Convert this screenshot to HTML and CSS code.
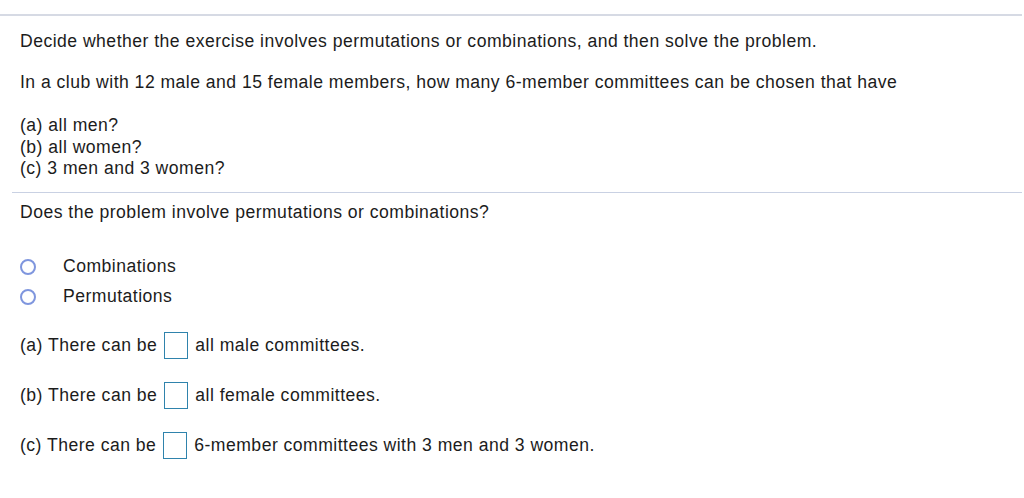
FILE: index.html
```html
<!DOCTYPE html>
<html>
<head>
<meta charset="utf-8">
<link rel="stylesheet" href="styles.css">
</head>
<body>
<div class="page">
  <div class="top-rule"></div>
  <div class="question">
    <p class="line intro">Decide whether the exercise involves permutations or combinations, and then solve the problem.</p>
    <p class="line stem">In a club with 12 male and 15 female members, how many 6-member committees can be chosen that have</p>
    <div class="parts">
      <div>(a) all men?</div>
      <div>(b) all women?</div>
      <div>(c) 3 men and 3 women?</div>
    </div>
  </div>
  <div class="mid-rule"></div>
  <div class="answers">
    <p class="line ask">Does the problem involve permutations or combinations?</p>
    <div class="choices">
      <label class="choice"><span class="radio"></span><span>Combinations</span></label>
      <label class="choice"><span class="radio"></span><span>Permutations</span></label>
    </div>
    <div class="fill first"><span>(a) There can be</span><span class="box"></span><span>all male committees.</span></div>
    <div class="fill"><span>(b) There can be</span><span class="box"></span><span>all female committees.</span></div>
    <div class="fill"><span>(c) There can be</span><span class="box"></span><span>6-member committees with 3 men and 3 women.</span></div>
  </div>
</div>
</body>
</html>
```

FILE: styles.css
```css
html, body {
  margin: 0;
  padding: 0;
  background: #ffffff;
}
body {
  font-family: "Liberation Sans", Arial, Helvetica, sans-serif;
  font-size: 17.6px;
  letter-spacing: 0.47px;
  color: #1c1c1c;
}
.page {
  width: 1024px;
  padding-top: 14px;
}
.top-rule {
  width: 1022px;
  height: 2px;
  background: #d6dae4;
}
.question {
  padding-left: 20px;
}
.line {
  margin: 0;
  line-height: 20px;
}
.intro {
  margin-top: 15px;
}
.stem {
  margin-top: 21px;
}
.parts {
  margin-top: 23px;
  line-height: 21.6px;
}
.mid-rule {
  margin-top: 12px;
  margin-left: 12px;
  width: 1010px;
  height: 1px;
  background: #c9d1e3;
}
.answers {
  padding-left: 20px;
}
.ask {
  margin-top: 9px;
}
.choices {
  margin-top: 35px;
  display: flex;
  flex-direction: column;
  gap: 10px;
}
.choice {
  display: flex;
  align-items: center;
  height: 20px;
}
.radio {
  width: 12px;
  height: 12px;
  border: 2px solid #7f96de;
  border-radius: 50%;
  margin-right: 27px;
  box-sizing: content-box;
  flex: none;
}
.fill {
  display: flex;
  align-items: center;
  height: 26px;
  margin-top: 24px;
}
.fill.first {
  margin-top: 26px;
}
.box {
  width: 22px;
  height: 25px;
  border: 1px solid #2f83ac;
  margin: 0 7px 0 7px;
  flex: none;
}
```
